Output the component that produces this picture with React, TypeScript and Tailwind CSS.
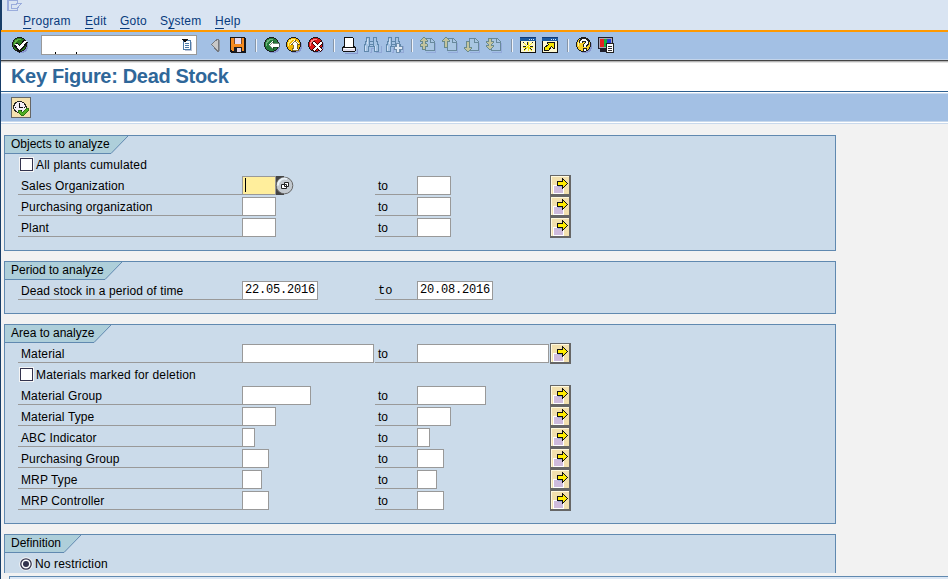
import type { ReactNode } from "react";
import clsx from "clsx";

const Icon = ({ children, size = 16 }: { children: ReactNode; size?: number }) => (
	<svg
		width={size}
		height={size}
		viewBox={`0 0 ${size} ${size}`}
		className="shrink-0 overflow-visible"
		shapeRendering="crispEdges"
		fill="none"
	>
		{children}
	</svg>
);

const Disc = ({ fill, light, children }: { fill: string; light: string; children: ReactNode }) => (
	<Icon>
		<path d="M14 6h2v6h-1v2h-1v1h-2v1H6v-2h6z" fill="#8797cf" />
		<path d="M5 0h5v1h2v1h1v1h1v2h1v5h-1v2h-1v1h-1v1h-2v1H5v-1H3v-1H2v-1H1v-2H0V5h1V3h1V2h1V1h2z" fill="#1c1c1c" />
		<path d="M5 1h5v1h2v1h1v2h1v5h-1v2h-1v1h-2v1H5v-1H3v-1H2v-2H1V5h1V3h1V2h2z" fill={fill} />
		<path d="M5 2h4v1H6v1H5v1H4v1H3v3H2V5h1V3h2z" fill={light} />
		{children}
	</Icon>
);

const Binoculars = ({ plus }: { plus?: boolean }) => (
	<Icon>
		<path d="M6 15h1v-4h5v4h5V9" stroke="#91a8d6" />
		<path d="M2.500 .5h3v4h4v-4h3v4h1v3h1v7h-4v-5h-6v5h-4v-7h1v-3h1z" fill="#a6c4e4" stroke="#5f87ab" />
		<path d="M5.500 4v6M9.500 4v6M6 7.500h4" stroke="#5f87ab" />
		<path d="M3.500 2v5M1.500 9v5M11.500 9v5" stroke="#d0e0f2" />
		{plus && (
			<>
				<path d="M10 6h4v3h3v4h-3v3h-4v-3H8V9h2z" fill="#6f8fae" />
				<path d="M11 7h2v3h3v2h-3v3h-2v-3H9v-2h2z" fill="#dfe9f4" />
			</>
		)}
	</Icon>
);

const Page = ({ kind }: { kind: "first" | "prev" | "next" | "last" }) => (
	<Icon>
		<path d="M6 15.500h9.500V6" stroke="#93aada" />
		<path d="M5.500 1.500h6l3 3v9h-9z" stroke="#68899c" fill="#a9c6e2" />
		<path d="M10.500 2v3.500H14" stroke="#68899c" />
		{kind === "first" && (
			<path d="M3.500 .5h1l3 3v1h-2v2h1l1 1v2h-2v3h-3v-3h-2v-2l1-1h1v-2h-2v-1z" fill="#c3c49d" stroke="#6a8a8c" />
		)}
		{kind === "prev" && <path d="M3.500 .5h1l3 3v1h-2v6h-3v-6h-2v-1z" fill="#c3c49d" stroke="#6a8a8c" />}
		{kind === "next" && <path d="M2.500 4.500h3v6h2v1l-3 3h-1l-3-3v-1h2z" fill="#c3c49d" stroke="#6a8a8c" />}
		{kind === "last" && (
			<path d="M2.500 1.500h3v3h2v1l-2 2v1h2v1l-3 3h-1l-3-3v-1h2v-1l-2-2v-1h2z" fill="#c3c49d" stroke="#6a8a8c" />
		)}
	</Icon>
);

const Session = ({ shortcut }: { shortcut?: boolean }) => (
	<Icon>
		<rect width="16" height="16" fill="#111" />
		<rect x="1" y="4" width="14" height="11" fill="#fdf8d0" />
		<rect width="16" height="4" fill="#1c5aa0" />
		<path d="M0 0h16v1H0z" fill="#123c78" />
		<path d="M9 2h1v1H9zM11 2h1v1h-1zM13 2h1v1h-1z" fill="#d6e5f8" />
		{shortcut ? (
			<path d="M5.500 5.500h7v6h-1l-2-2-3 4h-4v-3l4-3-1-1z" fill="#f7e800" stroke="#111" />
		) : (
			<>
				<path d="M7.500 5v3M8.500 12v2M3 9.500h3M10 9.500h3M3.500 5.500l3 3M12.500 5.500l-3 3M3.500 13.500l3-3M12.500 13.500l-3-3" stroke="#222" />
				<path d="M8 5v9M3 10h10M4 6l8 8M12 6l-8 8" stroke="#f4e418" />
			</>
		)}
	</Icon>
);

const Sep = () => <div className="ml-[9px] mr-[7px] h-[13px] w-0.5 border-l border-[#8796a8] bg-[#eef3fa]" />;

const MultiButton = () => (
	<button className="h-[21px] w-[21px] shrink-0 border-b-2 border-r-2 border-l border-t border-[#666] bg-[#f2e0ae]">
		<Icon size={18}>
			<path d="M.5 18V.5H18" stroke="#fff9df" />
			<path d="M2 9h11v9H2z" fill="#fff" />
			<path d="M3 10h9v7H3z" fill="#cfbcdd" />
			<path d="M7 9h6v2H7z" fill="#9fadd8" />
			<path d="M6.500 5.500h5v-3l5 5-5 5v-3h-5z" fill="#ffec00" stroke="#111" />
		</Icon>
	</button>
);

const menu = [
	{ before: "", key: "P", after: "rogram", width: "w-[62px]" },
	{ before: "", key: "E", after: "dit", width: "w-[35px]" },
	{ before: "", key: "G", after: "oto", width: "w-10" },
	{ before: "S", key: "y", after: "stem", width: "w-[55px]" },
	{ before: "", key: "H", after: "elp", width: "w-10" },
];

export default function App() {
	return (
		<div className="flex h-[579px] w-[948px] flex-col overflow-hidden border-l border-[#173d68] bg-[#f2f2f2] font-['Liberation_Sans',Arial,sans-serif] text-[12px] leading-[14px] text-black">
			<header className="h-[30px] shrink-0 border-l border-[#173d68] bg-[#d9e4f2]">
				<div className="h-[13px] pl-[5px]">
					<Icon>
						<path d="M10.500 3V.5H.5v10h10V9M1.500 1v9M4.500 4.500h5v-1h5l-4 4.500h-6z" stroke="#9aacdc" />
					</Icon>
				</div>
				<nav className="flex pl-[21px] pt-px text-[#083a7c]">
					{menu.map((m) => (
						<span key={m.key} className={clsx("tracking-[0.25px]", m.width)}>
							{m.before}
							<span className="underline underline-offset-[3px]">{m.key}</span>
							{m.after}
						</span>
					))}
				</nav>
			</header>
			<div className="h-0.5 shrink-0 bg-[#ff9900]" />
			<Toolbar />
			<div className="h-[3px] shrink-0 border-b border-t border-b-[#e4e4e4] border-t-[#444] bg-[#b4b4b4]" />
			<h1 className="h-7 shrink-0 bg-white pl-2.5 text-[20px] font-bold leading-[26px] tracking-[-0.32px] text-[#2f6799]">
				Key Figure: Dead Stock
			</h1>
			<div className="h-[3px] shrink-0 border-b border-t border-b-[#c9daef] border-t-[#2f6090] bg-white" />
			<div className="flex h-[27px] shrink-0 items-center bg-[#a3c0e4] pl-2.5">
				<button className="h-[21px] w-5 border border-[#666] bg-[#f4e1ae]">
					<Icon size={18}>
						<path d="M5 2h5v1h2v1h1v1h1v2h1v4h-1v2h-2v1H5v-1H3v-1H2v-2H1V6h1V4h1V3h2z" fill="#222" />
						<path d="M5 3h5v1h2v2h1v2h1v2h-1v1h-1v2H5v-1H4v-1H3v-1H2V7h1V5h1V4h1z" fill="#f2edf7" />
						<path d="M7.500 4v4.500H11M7 12h2v-1M3 8h1M12 8h1" stroke="#111" />
						<path d="M6.500 11.500h2l2 2 4-4h2v2l-5 5h-2l-3-3z" fill="#50ad24" stroke="#2b7614" />
					</Icon>
				</button>
			</div>
			<div className="h-[3px] shrink-0 border-y border-[#c9d9ec] bg-white" />
			<main className="flex h-[449px] shrink-0 flex-col gap-2.5 overflow-hidden pl-[3px] pt-[11px]">
				<Group title="Objects to analyze" tab={123}>
					<CheckRow label="All plants cumulated" />
					<RangeRow label="Sales Organization" size="w-[34px]" active more />
					<RangeRow label="Purchasing organization" size="w-[34px]" more />
					<RangeRow label="Plant" size="w-[34px]" more />
				</Group>
				<Group title="Period to analyze" tab={117}>
					<RangeRow label="Dead stock in a period of time" size="w-[76px]" from="22.05.2016" to="20.08.2016" />
				</Group>
				<Group title="Area to analyze" tab={106}>
					<RangeRow label="Material" size="w-[132px]" more />
					<CheckRow label="Materials marked for deletion" />
					<RangeRow label="Material Group" size="w-[69px]" more />
					<RangeRow label="Material Type" size="w-[34px]" more />
					<RangeRow label="ABC Indicator" size="w-[13px]" more />
					<RangeRow label="Purchasing Group" size="w-[27px]" more />
					<RangeRow label="MRP Type" size="w-5" more />
					<RangeRow label="MRP Controller" size="w-[27px]" more />
				</Group>
				<Group title="Definition" tab={76}>
					<div className="flex h-[21px] items-center pl-3.5">
						<svg width="14" height="14" viewBox="0 0 14 14">
							<circle cx="7" cy="7" r="6.800" fill="#f5f5f5" />
							<circle cx="7" cy="7" r="5.200" fill="#fff" stroke="#33334d" strokeWidth="1.300" />
							<circle cx="7" cy="7" r="3" fill="#33334d" />
						</svg>
						<span className="pl-0.5 tracking-[0.15px]">No restriction</span>
					</div>
				</Group>
			</main>
			<div className="mt-[3px] ml-2 h-[3px] shrink-0 border-l border-t border-[#6089b0] bg-[#dce7f4]" />
		</div>
	);
}

function Toolbar() {
	return (
		<div className="flex h-7 shrink-0 items-center border-b border-[#c3d4ea] bg-[#a3c0e4] pb-px pl-[11px]">
			<Disc fill="#2c7d20" light="#62b245">
				<path d="M3.500 7l4 5L14 4" stroke="#111" strokeWidth="5" />
				<path d="M4 7l3.500 4L14 4" stroke="#fff" strokeWidth="2.500" />
			</Disc>
			<div className="ml-[13px] flex h-5 w-[156px] items-center justify-between border border-[#999] bg-white">
				<div className="ml-[13px] mt-4 flex h-0.5 w-[22px] justify-between">
					<i className="h-0.5 w-px bg-black" />
					<i className="h-0.5 w-px bg-black" />
				</div>
				<Icon>
					<g transform="translate(2 0)">
						<path d="M3 13.500h6.500V5" stroke="#b9c2d6" />
						<path d="M1.500 3.500h7v9h-7z" stroke="#4d7ba8" fill="#fff" />
						<path d="M0 2h6v1H5v1H4v1H2V4H1V3H0z" fill="#111" />
						<path d="M3 6.500h4M3 8.500h4M3 10.500h4" stroke="#4d7ba8" />
					</g>
				</Icon>
			</div>
			<div className="ml-[11px] flex">
				<Icon>
					<path d="M11 3h1v11h-2z" fill="#8e98a5" />
					<path d="M3.500 7.500l6-5.500h1v12h-1z" fill="#c8c8c8" stroke="#75797f" />
				</Icon>
			</div>
			<div className="ml-1.5 flex">
				<Icon>
					<path d="M0 0h15v1h1v15H1v-1H0z" fill="#16161a" />
					<path d="M1 1h3v6h8V1h2v13h-2v-4H4v4H2v-1H1z" fill="#f58a1f" />
					<path d="M12 1h2v13h-2zM4 7h8v2H4z" fill="#f58a1f" />
					<path d="M4 1h1v6H4zM11 1h1v6h-1z" fill="#7d4a2a" />
					<path d="M5 1h6v6H5z" fill="#e9dcf0" />
					<path d="M4 10h8v5H4z" fill="#1c1c20" />
					<path d="M7 11h4v4H7z" fill="#ddd3e6" />
				</Icon>
			</div>
			<Sep />
			<div className="flex gap-1.5">
				<Disc fill="#257b3b" light="#70b37c">
					<path d="M4.500 8l4.500-4.500v2.500h6v4H9v2.500z" fill="#fff" stroke="#123d1d" strokeWidth=".6" />
				</Disc>
				<Disc fill="#f5b800" light="#fff27c">
					<path d="M9 2.500l4.500 5H11v4h1v2H6v-2h1v-4H4.500z" fill="#fff" stroke="#6b5208" strokeWidth=".8" />
				</Disc>
				<Disc fill="#dc1818" light="#ff8585">
					<path d="M5 5l9 9M14 5l-9 9" stroke="#3c0505" strokeWidth="4" />
					<path d="M5.500 5.500l8 8M13.500 5.500l-8 8" stroke="#fff" strokeWidth="2" />
				</Disc>
			</div>
			<Sep />
			<div className="flex gap-1.5">
				<Icon>
					<path d="M3 16h12v-4" stroke="#8797cf" />
					<path d="M2 0h9v1h1v8h1v1h1v4h-1v1H1v-1H0v-4h1V9h1z" fill="#111" />
					<path d="M3 1h8v9H3z" fill="#fff" />
					<path d="M1 11h12v3H1z" fill="#e4e0ee" />
					<path d="M2 11h10v1H2z" fill="#fff" />
				</Icon>
				<Binoculars />
				<Binoculars plus />
			</div>
			<Sep />
			<div className="flex gap-1.5">
				<Page kind="first" />
				<Page kind="prev" />
				<Page kind="next" />
				<Page kind="last" />
			</div>
			<Sep />
			<div className="flex gap-1.5">
				<Session />
				<Session shortcut />
			</div>
			<Sep />
			<div className="flex gap-1.5">
				<Disc fill="#f8cf2d" light="#fff6a0">
					<path d="M5 6V4.500L6.500 3h3L11 4.500v2L8.500 8.500V10M8.500 11v2.500" stroke="#222" strokeWidth="4" />
					<path d="M5 6V4.500L6.500 3h3L11 4.500v2L8.500 8.500V10M8.500 11.500v2" stroke="#fff" strokeWidth="2" />
				</Disc>
				<Icon>
					<path d="M0 0h15v12H0zM2 12h11v3H2z" fill="#20202c" />
					<path d="M1 1h13v10H1z" fill="#aaa5b5" />
					<path d="M2 2h4v8H2z" fill="#e52323" />
					<path d="M6 2h3v8H6z" fill="#12b33c" />
					<path d="M9 2h4v8H9z" fill="#263ed0" />
					<path d="M8.500 6.500h7v9h-7z" fill="#fff" stroke="#222" />
					<path d="M10 9.500h4M10 11.500h4M10 13.500h4" stroke="#333" />
				</Icon>
			</div>
		</div>
	);
}

function Group({ title, tab, children }: { title: string; tab: number; children: ReactNode }) {
	return (
		<section className="w-[832px] shrink-0 border border-[#6089b0] bg-[#cbdbea] pb-3">
			<div className="relative h-[18px]">
				<svg width={tab} height="18" className="absolute left-0 top-0">
					<path d={`M0 0H${tab}L${tab - 17} 17.500H0z`} fill="#aecfda" />
					<path d={`M${tab} 0L${tab - 17} 17.500H0`} fill="none" stroke="#6089b0" />
				</svg>
				<h2 className="relative pl-1.5 pt-px">{title}</h2>
			</div>
			{children}
		</section>
	);
}

function CheckRow({ label }: { label: string }) {
	return (
		<div className="flex h-[21px] items-center pl-[15px]">
			<span className="h-[13px] w-[13px] border border-[#33334d] bg-white outline outline-[#f5f5f5]" />
			<span className="pl-[3px] tracking-[0.18px]">{label}</span>
		</div>
	);
}

function RangeRow({
	label,
	size,
	from,
	to,
	active,
	more,
}: {
	label: string;
	size: string;
	from?: string;
	to?: string;
	active?: boolean;
	more?: boolean;
}) {
	const field =
		"h-[19px] shrink-0 border border-[#999] pl-0.5 font-['Liberation_Mono',monospace] leading-[16px] tracking-[-0.2px]";
	return (
		<div className="flex h-[21px] items-center pl-[13px]">
			<div className="flex w-[357px]">
				<div className="h-[19px] w-56 border-b border-[#999] pl-[3px] pt-[3px] tracking-[0.12px]">{label}</div>
				<div className={clsx(field, size, active ? "bg-[#ffee9c]" : "bg-white")}>
					{active && <i className="mt-px block h-[14px] w-px bg-black" />}
					{from}
				</div>
				{active && (
					<div className="h-[19px] bg-[#444]">
						<svg width="17" height="19" viewBox="0 0 17 19" className="overflow-visible">
							<path d="M8 0h9v19H8z" fill="#cbdbea" />
							<circle cx="8.500" cy="9.500" r="8.300" fill="#c3c9cf" stroke="#666" />
							<path d="M2 9.500a6.500 7 0 0 1 9-6.500" stroke="#e8f1f8" strokeWidth="2" fill="none" />
							<path d="M8.500 6.500h4v4h-4zM5.500 8.500h5v4h-5z" fill="#fff" stroke="#222" />
						</svg>
					</div>
				)}
			</div>
			<div className={clsx("h-[19px] w-[42px] border-b border-[#999] pl-[3px] pt-[3px]", from && "font-['Liberation_Mono',monospace]")}>
				to
			</div>
			<div className="w-[133px]">
				<div className={clsx(field, size, "bg-white")}>{to}</div>
			</div>
			{more && <MultiButton />}
		</div>
	);
}
